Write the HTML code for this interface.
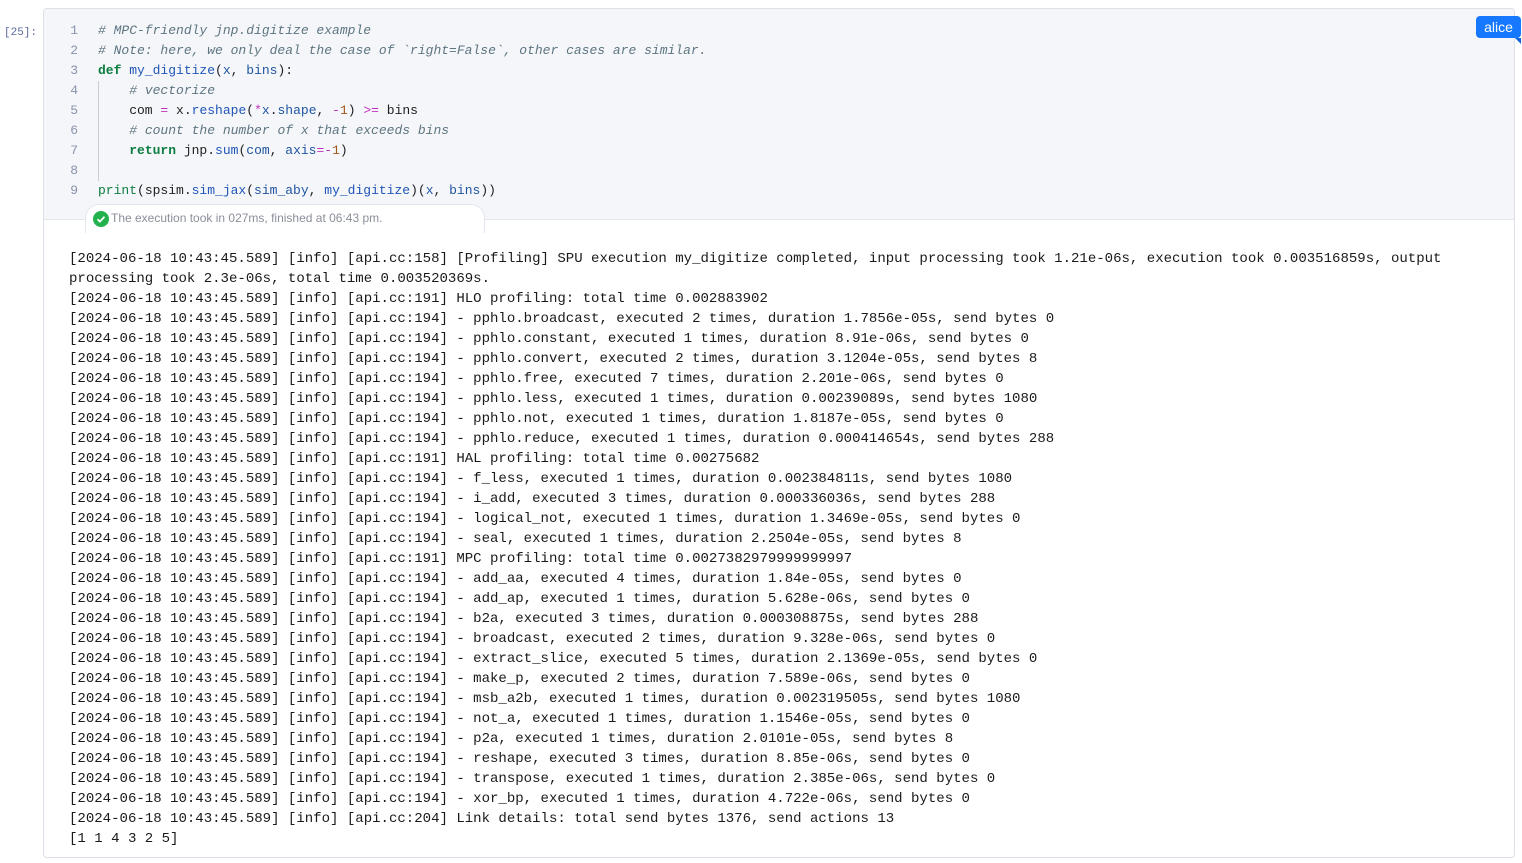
<!DOCTYPE html>
<html><head><meta charset="utf-8"><style>
html,body{margin:0;padding:0;background:#fff;width:1522px;height:863px;overflow:hidden;font-family:"Liberation Sans",sans-serif}
.prompt{position:absolute;left:4px;top:27px;font:11px "Liberation Mono",monospace;color:#5a6a9a}
.card{position:absolute;left:43px;top:8px;width:1470px;height:848px;border:1px solid #dde0e8;border-radius:4px;background:#fff}
.code{position:absolute;left:0;top:0;width:1470px;height:210px;background:#f5f6fa;border-bottom:1px solid #e3e6ee;border-radius:4px 4px 0 0}
.ln{position:absolute;left:18px;top:12px;width:16px;text-align:right;font:13px/20px "Liberation Mono",monospace;color:#8a93ad}
.src{position:absolute;left:54px;top:12px;font:13px/20px "Liberation Mono",monospace;color:#1f1f1f;white-space:pre}
.c{color:#5d7580;font-style:italic}.k{color:#0b7d3e;font-weight:bold}.f{color:#1f55b8}.v{color:#1f55a0}.o{color:#c030c0}.n{color:#a0581a}
.guide{position:absolute;left:54px;top:72px;width:1px;height:100px;background:#ccc}
.pill{position:absolute;left:41px;top:195px;width:398px;height:28px;border:1px solid #e3e6ee;border-bottom:none;border-radius:14px 14px 0 0;background:#fff;font-size:12px;color:#8a8f99;line-height:18px}
.pill .ic{position:absolute;left:7px;top:6px;width:16px;height:16px;border-radius:50%;background:#22b14c}
.pill span.t{position:absolute;left:25px;top:4px}
.out{position:absolute;left:25px;top:240px;font:14.04px/20px "Liberation Mono",monospace;color:#1a1a1a;white-space:pre}
.badge{position:absolute;left:1476px;top:16px;width:45px;height:22px;background:#1677ff;border-radius:4px;color:#fff;font-size:14px;line-height:22px;text-align:center}
.badge:after{content:"";position:absolute;right:0;bottom:-6px;border-top:6px solid #1265d6;border-left:6px solid transparent}
</style></head><body>
<div class="prompt">[25]:</div>
<div class="card">
<div class="code">
<div class="ln">1<br>2<br>3<br>4<br>5<br>6<br>7<br>8<br>9</div>
<div class="guide"></div>
<div class="src"><span class="c"># MPC-friendly jnp.digitize example</span>
<span class="c"># Note: here, we only deal the case of `right=False`, other cases are similar.</span>
<span class="k">def</span> <span class="f">my_digitize</span>(<span class="v">x</span>, <span class="v">bins</span>):
    <span class="c"># vectorize</span>
    com <span class="o">=</span> x.<span class="f">reshape</span>(<span class="o">*</span><span class="v">x</span>.<span class="v">shape</span>, <span class="o">-</span><span class="n">1</span>) <span class="o">&gt;=</span> bins
    <span class="c"># count the number of x that exceeds bins</span>
    <span class="k">return</span> jnp.<span class="f">sum</span>(<span class="v">com</span>, <span class="v">axis</span><span class="o">=-</span><span class="n">1</span>)

<span class="k" style="font-weight:normal">print</span>(spsim.<span class="f">sim_jax</span>(<span class="v">sim_aby</span>, <span class="f">my_digitize</span>)(<span class="v">x</span>, <span class="v">bins</span>))</div>
</div>
<div class="pill"><div class="ic"><svg width="16" height="16"><path d="M4.5 8.2l2.4 2.4 4.6-4.8" stroke="#fff" stroke-width="1.8" fill="none"/></svg></div><span class="t">The execution took in 027ms, finished at 06:43 pm.</span></div>
<div class="out">[2024-06-18 10:43:45.589] [info] [api.cc:158] [Profiling] SPU execution my_digitize completed, input processing took 1.21e-06s, execution took 0.003516859s, output
processing took 2.3e-06s, total time 0.003520369s.
[2024-06-18 10:43:45.589] [info] [api.cc:191] HLO profiling: total time 0.002883902
[2024-06-18 10:43:45.589] [info] [api.cc:194] - pphlo.broadcast, executed 2 times, duration 1.7856e-05s, send bytes 0
[2024-06-18 10:43:45.589] [info] [api.cc:194] - pphlo.constant, executed 1 times, duration 8.91e-06s, send bytes 0
[2024-06-18 10:43:45.589] [info] [api.cc:194] - pphlo.convert, executed 2 times, duration 3.1204e-05s, send bytes 8
[2024-06-18 10:43:45.589] [info] [api.cc:194] - pphlo.free, executed 7 times, duration 2.201e-06s, send bytes 0
[2024-06-18 10:43:45.589] [info] [api.cc:194] - pphlo.less, executed 1 times, duration 0.00239089s, send bytes 1080
[2024-06-18 10:43:45.589] [info] [api.cc:194] - pphlo.not, executed 1 times, duration 1.8187e-05s, send bytes 0
[2024-06-18 10:43:45.589] [info] [api.cc:194] - pphlo.reduce, executed 1 times, duration 0.000414654s, send bytes 288
[2024-06-18 10:43:45.589] [info] [api.cc:191] HAL profiling: total time 0.00275682
[2024-06-18 10:43:45.589] [info] [api.cc:194] - f_less, executed 1 times, duration 0.002384811s, send bytes 1080
[2024-06-18 10:43:45.589] [info] [api.cc:194] - i_add, executed 3 times, duration 0.000336036s, send bytes 288
[2024-06-18 10:43:45.589] [info] [api.cc:194] - logical_not, executed 1 times, duration 1.3469e-05s, send bytes 0
[2024-06-18 10:43:45.589] [info] [api.cc:194] - seal, executed 1 times, duration 2.2504e-05s, send bytes 8
[2024-06-18 10:43:45.589] [info] [api.cc:191] MPC profiling: total time 0.0027382979999999997
[2024-06-18 10:43:45.589] [info] [api.cc:194] - add_aa, executed 4 times, duration 1.84e-05s, send bytes 0
[2024-06-18 10:43:45.589] [info] [api.cc:194] - add_ap, executed 1 times, duration 5.628e-06s, send bytes 0
[2024-06-18 10:43:45.589] [info] [api.cc:194] - b2a, executed 3 times, duration 0.000308875s, send bytes 288
[2024-06-18 10:43:45.589] [info] [api.cc:194] - broadcast, executed 2 times, duration 9.328e-06s, send bytes 0
[2024-06-18 10:43:45.589] [info] [api.cc:194] - extract_slice, executed 5 times, duration 2.1369e-05s, send bytes 0
[2024-06-18 10:43:45.589] [info] [api.cc:194] - make_p, executed 2 times, duration 7.589e-06s, send bytes 0
[2024-06-18 10:43:45.589] [info] [api.cc:194] - msb_a2b, executed 1 times, duration 0.002319505s, send bytes 1080
[2024-06-18 10:43:45.589] [info] [api.cc:194] - not_a, executed 1 times, duration 1.1546e-05s, send bytes 0
[2024-06-18 10:43:45.589] [info] [api.cc:194] - p2a, executed 1 times, duration 2.0101e-05s, send bytes 8
[2024-06-18 10:43:45.589] [info] [api.cc:194] - reshape, executed 3 times, duration 8.85e-06s, send bytes 0
[2024-06-18 10:43:45.589] [info] [api.cc:194] - transpose, executed 1 times, duration 2.385e-06s, send bytes 0
[2024-06-18 10:43:45.589] [info] [api.cc:194] - xor_bp, executed 1 times, duration 4.722e-06s, send bytes 0
[2024-06-18 10:43:45.589] [info] [api.cc:204] Link details: total send bytes 1376, send actions 13
[1 1 4 3 2 5]</div>
</div>
<div class="badge">alice</div>
</body></html>
